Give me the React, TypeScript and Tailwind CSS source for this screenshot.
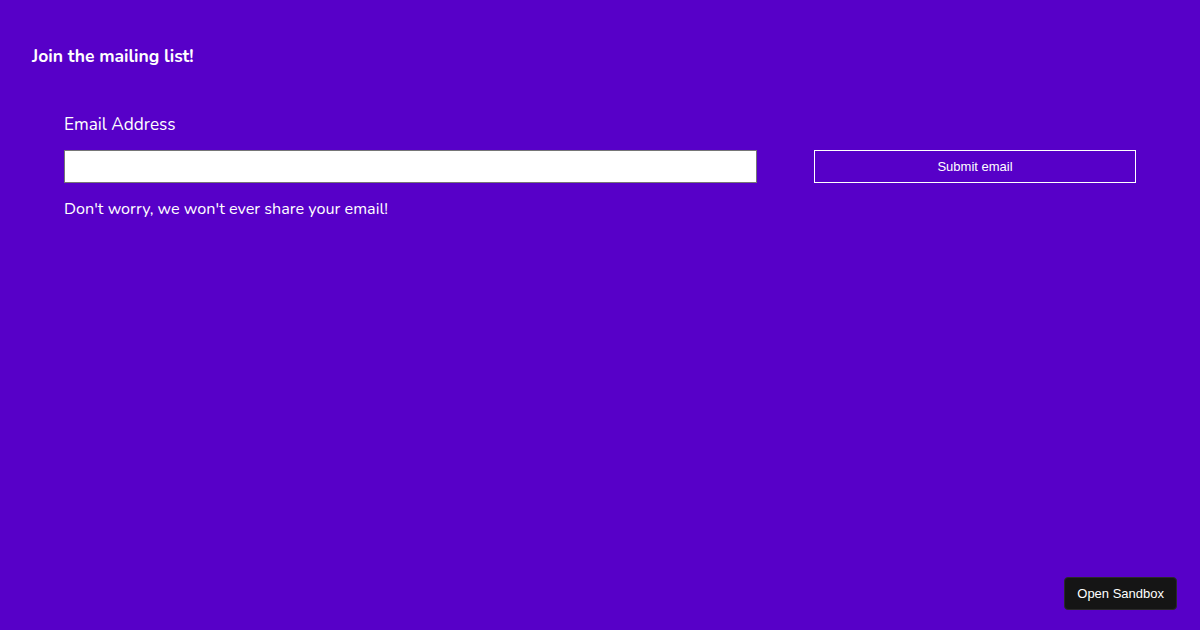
export default function App() {
  return (
    <div className="relative w-[1200px] h-[630px] bg-[#5700c8] text-white font-['Nunito','Lato',sans-serif] overflow-hidden">
      <div className="px-8 pt-[45px]">
        <h1 className="text-[17.5px] font-bold leading-[22px]">Join the mailing list!</h1>
      </div>

      <form className="px-16 pt-[46px]" onSubmit={(e) => e.preventDefault()}>
        <label htmlFor="email" className="block text-[17.2px] leading-[24px]">
          Email Address
        </label>
        <div className="flex items-center mt-[13px]">
          <input
            id="email"
            type="email"
            className="w-[693px] h-[33px] bg-white border border-[#767676] text-black px-2 outline-none"
          />
          <button
            type="submit"
            className="ml-[57px] w-[322px] h-[33px] border border-white text-[13px] font-['Liberation_Sans',Arial,sans-serif] bg-transparent"
          >
            Submit email
          </button>
        </div>
        <p className="mt-[15px] text-[16.2px] leading-[22px]">Don't worry, we won't ever share your email!</p>
      </form>

      <button className="absolute right-[23px] bottom-[20px] h-[33px] px-[12px] rounded-[4px] bg-[#151515] border border-[#2a2a2a] text-[13px] text-white font-['Liberation_Sans',Arial,sans-serif]">
        Open Sandbox
      </button>
    </div>
  );
}
